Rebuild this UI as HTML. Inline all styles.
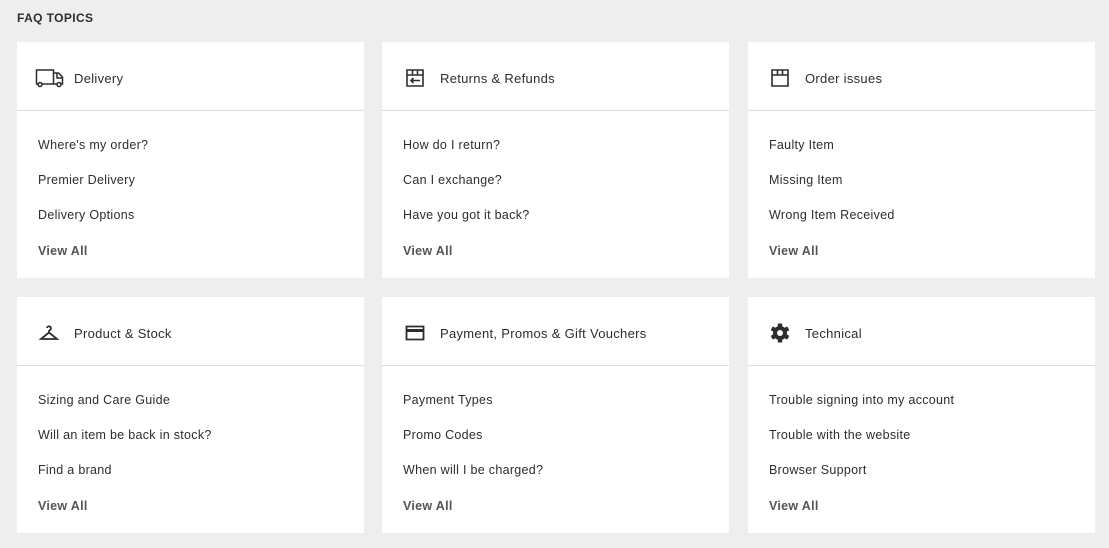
<!DOCTYPE html>
<html><head><style>
*{margin:0;padding:0;box-sizing:border-box}
body{width:1109px;height:548px;background:#eeeeee;font-family:"Liberation Sans",sans-serif;color:#2d2d2d;position:relative;overflow:hidden}
h1{position:absolute;left:17px;top:11px;font-size:12px;font-weight:bold;letter-spacing:.4px;color:#2d2d2d}
.c{position:absolute;background:#fff;width:347px;height:236px}
.hd{height:69px;border-bottom:1px solid #ddd;position:relative;font-size:13px;letter-spacing:.3px}
.hd svg{position:absolute}
.hd span{position:absolute;top:29px}
.ls{font-size:12.5px;letter-spacing:.3px}
.ls div{position:absolute;left:21px}
.va{font-weight:bold;color:#555}
</style></head><body>
<h1>FAQ TOPICS</h1>

<div class="c" style="left:17px;top:42px"><div class="hd"><svg viewBox="0 0 30 20" width="30" height="20" style="left:18px;top:26px" fill="none" stroke="#2d2d2d" stroke-width="1.5"><path d="M1.5 2h17v14h-17zM18.5 5h5l4 4v7h-9"/><path d="M22 5v5h5"/><circle cx="5" cy="16.5" r="2" fill="#fff"/><circle cx="24" cy="16.5" r="2" fill="#fff"/></svg><span style="left:57px">Delivery</span></div>
<div class="ls"><div style="top:96px">Where's my order?</div><div style="top:131px">Premier Delivery</div><div style="top:166px">Delivery Options</div><div class="va" style="top:202px">View All</div></div></div>

<div class="c" style="left:382px;top:42px"><div class="hd"><svg viewBox="0 0 20 20" width="20" height="20" style="left:23px;top:26px" fill="none" stroke="#2d2d2d" stroke-width="1.6"><path d="M2 2h16v16H2zM2 7h16M7.5 2v5M12.5 2v5M15 12.5H6M8.5 10l-2.5 2.5 2.5 2.5"/></svg><span style="left:58px">Returns &amp; Refunds</span></div>
<div class="ls"><div style="top:96px">How do I return?</div><div style="top:131px">Can I exchange?</div><div style="top:166px">Have you got it back?</div><div class="va" style="top:202px">View All</div></div></div>

<div class="c" style="left:748px;top:42px"><div class="hd"><svg viewBox="0 0 20 20" width="20" height="20" style="left:22px;top:26px" fill="none" stroke="#2d2d2d" stroke-width="1.6"><path d="M2 2h16v16H2zM2 7h16M7.5 2v5M12.5 2v5"/></svg><span style="left:57px">Order issues</span></div>
<div class="ls"><div style="top:96px">Faulty Item</div><div style="top:131px">Missing Item</div><div style="top:166px">Wrong Item Received</div><div class="va" style="top:202px">View All</div></div></div>

<div class="c" style="left:17px;top:297px"><div class="hd"><svg viewBox="0 0 20 20" width="22" height="20" style="left:21px;top:26px" fill="none" stroke="#2d2d2d" stroke-width="1.8"><path d="M8 5a2 2 0 1 1 3 2l-1 1v1.5M10 9.5l-8 6.5h16z"/></svg><span style="left:57px">Product &amp; Stock</span></div>
<div class="ls"><div style="top:96px">Sizing and Care Guide</div><div style="top:131px">Will an item be back in stock?</div><div style="top:166px">Find a brand</div><div class="va" style="top:202px">View All</div></div></div>

<div class="c" style="left:382px;top:297px"><div class="hd"><svg viewBox="0 0 20 20" width="20" height="20" style="left:23px;top:26px" fill="none" stroke="#2d2d2d" stroke-width="1.8"><path d="M1.5 3.5h17v13h-17z"/><path d="M1.5 7.5h17" stroke-width="3"/></svg><span style="left:58px">Payment, Promos &amp; Gift Vouchers</span></div>
<div class="ls"><div style="top:96px">Payment Types</div><div style="top:131px">Promo Codes</div><div style="top:166px">When will I be charged?</div><div class="va" style="top:202px">View All</div></div></div>

<div class="c" style="left:748px;top:297px"><div class="hd"><svg viewBox="0 0 20 20" width="20" height="20" style="left:22px;top:26px"><g fill="#2d2d2d" transform="translate(10 10)"><circle r="7"/><rect x="-2.2" y="-9.5" width="4.4" height="19"/><rect x="-2.2" y="-9.5" width="4.4" height="19" transform="rotate(60)"/><rect x="-2.2" y="-9.5" width="4.4" height="19" transform="rotate(120)"/></g><circle cx="10" cy="10" r="3" fill="#fff"/></svg><span style="left:57px">Technical</span></div>
<div class="ls"><div style="top:96px">Trouble signing into my account</div><div style="top:131px">Trouble with the website</div><div style="top:166px">Browser Support</div><div class="va" style="top:202px">View All</div></div></div>
</body></html>
